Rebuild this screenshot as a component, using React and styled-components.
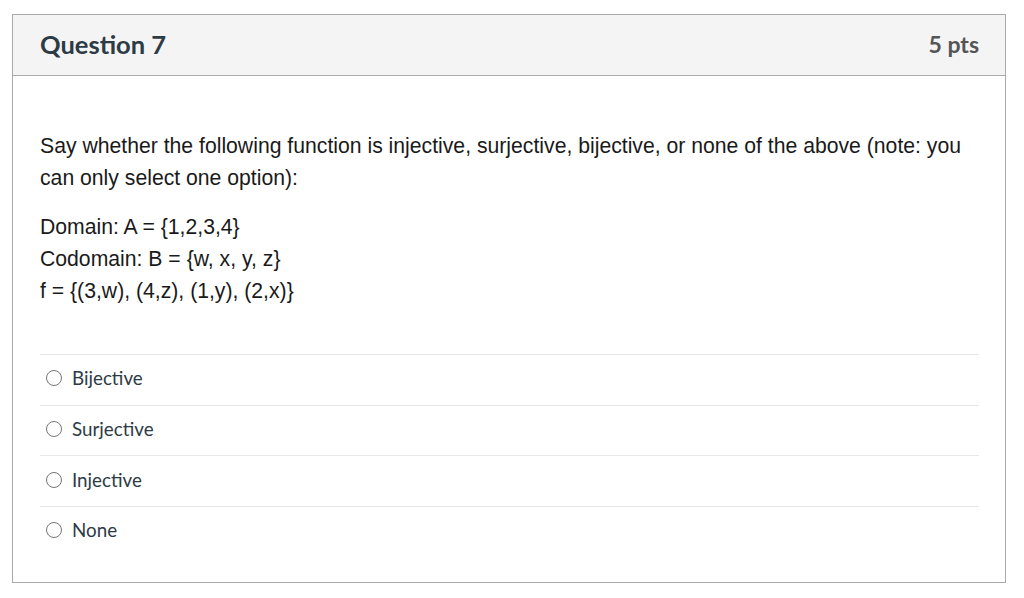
import styled, { createGlobalStyle } from 'styled-components';

const GlobalStyle = createGlobalStyle`
  body {
    margin: 0;
    background: #fff;
  }
`;

const answers = ['Bijective', 'Surjective', 'Injective', 'None'];

export default function App() {
  return (
    <>
      <GlobalStyle />
      <Page>
        <Card>
          <Header>
            <Title>Question 7</Title>
            <Points>5 pts</Points>
          </Header>
          <Body>
            <Text>
              Say whether the following function is injective, surjective, bijective, or none of the above (note: you
              can only select one option):
            </Text>
            <Text>
              Domain: A = {'{1,2,3,4}'}
              <br />
              Codomain: B = {'{w, x, y, z}'}
              <br />
              f = {'{(3,w), (4,z), (1,y), (2,x)}'}
            </Text>
            <AnswerList>
              {answers.map(answer => (
                <Answer key={answer}>
                  <Radio />
                  <Label>{answer}</Label>
                </Answer>
              ))}
            </AnswerList>
          </Body>
        </Card>
      </Page>
    </>
  );
}

const Page = styled.div`
  padding: 14px 18px 0 12px;
`;

const Card = styled.section`
  width: 994px;
  box-sizing: border-box;
  border: 1px solid #aaaaaa;
`;

const Header = styled.header`
  height: 61px;
  box-sizing: border-box;
  display: flex;
  align-items: center;
  justify-content: space-between;
  padding: 0 26px 3px 27px;
  background: #f4f4f4;
  border-bottom: 1px solid #aaaaaa;
`;

const Title = styled.h2`
  margin: 0;
  font-family: Lato, 'Liberation Sans', sans-serif;
  font-size: 25.5px;
  font-weight: 700;
  color: #2d3b45;
`;

const Points = styled.span`
  font-family: Lato, 'Liberation Sans', sans-serif;
  font-size: 23px;
  font-weight: 700;
  color: #555555;
`;

const Body = styled.div`
  padding: 54px 26px 25px 27px;
`;

const Text = styled.p`
  margin: 0 0 17px;
  font-family: 'Liberation Sans', Arial, sans-serif;
  font-size: 21.2px;
  line-height: 32px;
  color: #1a1a1a;
`;

const AnswerList = styled.div`
  margin-top: 47px;
`;

const Answer = styled.label`
  display: flex;
  align-items: center;
  height: 50.67px;
  box-sizing: border-box;
  padding: 0 0 4px 6px;
  border-top: 1px solid #e6e6e6;
`;

const Radio = styled.span`
  width: 16px;
  height: 16px;
  box-sizing: border-box;
  border: 1px solid #767676;
  border-radius: 50%;
  margin-right: 10px;
  margin-top: 1px;
`;

const Label = styled.span`
  font-family: Lato, 'Liberation Sans', sans-serif;
  font-size: 18.8px;
  color: #2d3b45;
`;
